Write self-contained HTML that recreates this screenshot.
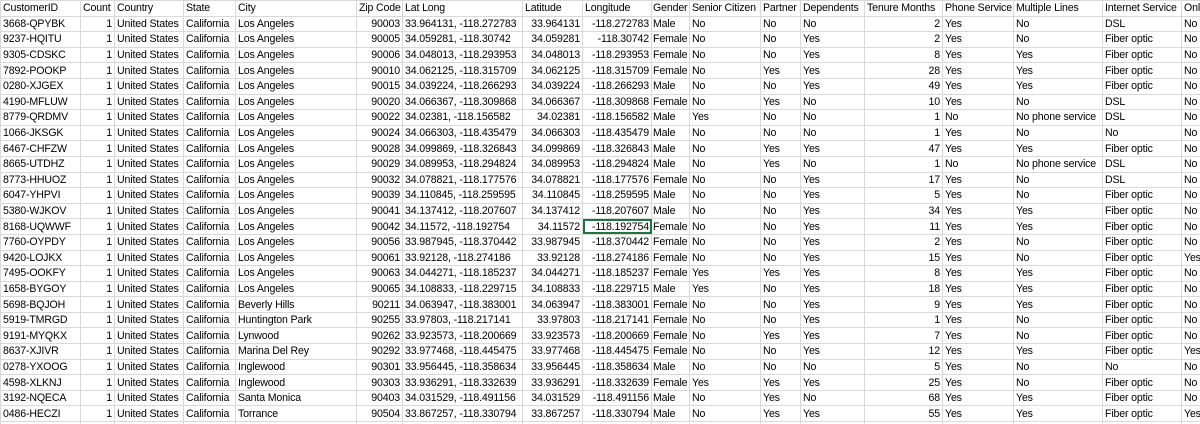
<!DOCTYPE html>
<html><head><meta charset="utf-8"><style>
html,body{margin:0;padding:0;background:#fff;width:1200px;height:424px;overflow:hidden}
table{border-collapse:collapse;table-layout:fixed;font-family:"Liberation Sans",sans-serif;font-size:10.6px;letter-spacing:-0.15px;color:#000;width:1211px}
td{border:1px solid #d9d9d9;height:14.6px;padding:0 2px;white-space:nowrap;overflow:hidden;line-height:14px}
td:nth-child(10){padding:0 0 0 1px}
td:nth-child(2),td:nth-child(6),td:nth-child(8),td:nth-child(9),td:nth-child(14){text-align:right}
tr:first-child td{text-align:left}
.sel{outline:2px solid #217346;outline-offset:-2px}
</style></head><body>
<table>
<colgroup><col style="width:80px"><col style="width:34px"><col style="width:69px"><col style="width:52px"><col style="width:121px"><col style="width:46px"><col style="width:120px"><col style="width:60px"><col style="width:69px"><col style="width:38px"><col style="width:71px"><col style="width:40px"><col style="width:64px"><col style="width:78px"><col style="width:71px"><col style="width:89px"><col style="width:79px"><col style="width:30px"></colgroup>
<tr><td>CustomerID</td><td>Count</td><td>Country</td><td>State</td><td>City</td><td>Zip Code</td><td>Lat Long</td><td>Latitude</td><td>Longitude</td><td>Gender</td><td>Senior Citizen</td><td>Partner</td><td>Dependents</td><td>Tenure Months</td><td>Phone Service</td><td>Multiple Lines</td><td>Internet Service</td><td>Online</td></tr>
<tr><td>3668-QPYBK</td><td>1</td><td>United States</td><td>California</td><td>Los Angeles</td><td>90003</td><td>33.964131, -118.272783</td><td>33.964131</td><td>-118.272783</td><td>Male</td><td>No</td><td>No</td><td>No</td><td>2</td><td>Yes</td><td>No</td><td>DSL</td><td>No</td></tr>
<tr><td>9237-HQITU</td><td>1</td><td>United States</td><td>California</td><td>Los Angeles</td><td>90005</td><td>34.059281, -118.30742</td><td>34.059281</td><td>-118.30742</td><td>Female</td><td>No</td><td>No</td><td>Yes</td><td>2</td><td>Yes</td><td>No</td><td>Fiber optic</td><td>No</td></tr>
<tr><td>9305-CDSKC</td><td>1</td><td>United States</td><td>California</td><td>Los Angeles</td><td>90006</td><td>34.048013, -118.293953</td><td>34.048013</td><td>-118.293953</td><td>Female</td><td>No</td><td>No</td><td>Yes</td><td>8</td><td>Yes</td><td>Yes</td><td>Fiber optic</td><td>No</td></tr>
<tr><td>7892-POOKP</td><td>1</td><td>United States</td><td>California</td><td>Los Angeles</td><td>90010</td><td>34.062125, -118.315709</td><td>34.062125</td><td>-118.315709</td><td>Female</td><td>No</td><td>Yes</td><td>Yes</td><td>28</td><td>Yes</td><td>Yes</td><td>Fiber optic</td><td>No</td></tr>
<tr><td>0280-XJGEX</td><td>1</td><td>United States</td><td>California</td><td>Los Angeles</td><td>90015</td><td>34.039224, -118.266293</td><td>34.039224</td><td>-118.266293</td><td>Male</td><td>No</td><td>No</td><td>Yes</td><td>49</td><td>Yes</td><td>Yes</td><td>Fiber optic</td><td>No</td></tr>
<tr><td>4190-MFLUW</td><td>1</td><td>United States</td><td>California</td><td>Los Angeles</td><td>90020</td><td>34.066367, -118.309868</td><td>34.066367</td><td>-118.309868</td><td>Female</td><td>No</td><td>Yes</td><td>No</td><td>10</td><td>Yes</td><td>No</td><td>DSL</td><td>No</td></tr>
<tr><td>8779-QRDMV</td><td>1</td><td>United States</td><td>California</td><td>Los Angeles</td><td>90022</td><td>34.02381, -118.156582</td><td>34.02381</td><td>-118.156582</td><td>Male</td><td>Yes</td><td>No</td><td>No</td><td>1</td><td>No</td><td>No phone service</td><td>DSL</td><td>No</td></tr>
<tr><td>1066-JKSGK</td><td>1</td><td>United States</td><td>California</td><td>Los Angeles</td><td>90024</td><td>34.066303, -118.435479</td><td>34.066303</td><td>-118.435479</td><td>Male</td><td>No</td><td>No</td><td>No</td><td>1</td><td>Yes</td><td>No</td><td>No</td><td>No</td></tr>
<tr><td>6467-CHFZW</td><td>1</td><td>United States</td><td>California</td><td>Los Angeles</td><td>90028</td><td>34.099869, -118.326843</td><td>34.099869</td><td>-118.326843</td><td>Male</td><td>No</td><td>Yes</td><td>Yes</td><td>47</td><td>Yes</td><td>Yes</td><td>Fiber optic</td><td>No</td></tr>
<tr><td>8665-UTDHZ</td><td>1</td><td>United States</td><td>California</td><td>Los Angeles</td><td>90029</td><td>34.089953, -118.294824</td><td>34.089953</td><td>-118.294824</td><td>Male</td><td>No</td><td>Yes</td><td>No</td><td>1</td><td>No</td><td>No phone service</td><td>DSL</td><td>No</td></tr>
<tr><td>8773-HHUOZ</td><td>1</td><td>United States</td><td>California</td><td>Los Angeles</td><td>90032</td><td>34.078821, -118.177576</td><td>34.078821</td><td>-118.177576</td><td>Female</td><td>No</td><td>No</td><td>Yes</td><td>17</td><td>Yes</td><td>No</td><td>DSL</td><td>No</td></tr>
<tr><td>6047-YHPVI</td><td>1</td><td>United States</td><td>California</td><td>Los Angeles</td><td>90039</td><td>34.110845, -118.259595</td><td>34.110845</td><td>-118.259595</td><td>Male</td><td>No</td><td>No</td><td>Yes</td><td>5</td><td>Yes</td><td>No</td><td>Fiber optic</td><td>No</td></tr>
<tr><td>5380-WJKOV</td><td>1</td><td>United States</td><td>California</td><td>Los Angeles</td><td>90041</td><td>34.137412, -118.207607</td><td>34.137412</td><td>-118.207607</td><td>Male</td><td>No</td><td>No</td><td>Yes</td><td>34</td><td>Yes</td><td>Yes</td><td>Fiber optic</td><td>No</td></tr>
<tr><td>8168-UQWWF</td><td>1</td><td>United States</td><td>California</td><td>Los Angeles</td><td>90042</td><td>34.11572, -118.192754</td><td>34.11572</td><td class="sel">-118.192754</td><td>Female</td><td>No</td><td>No</td><td>Yes</td><td>11</td><td>Yes</td><td>Yes</td><td>Fiber optic</td><td>No</td></tr>
<tr><td>7760-OYPDY</td><td>1</td><td>United States</td><td>California</td><td>Los Angeles</td><td>90056</td><td>33.987945, -118.370442</td><td>33.987945</td><td>-118.370442</td><td>Female</td><td>No</td><td>No</td><td>Yes</td><td>2</td><td>Yes</td><td>No</td><td>Fiber optic</td><td>No</td></tr>
<tr><td>9420-LOJKX</td><td>1</td><td>United States</td><td>California</td><td>Los Angeles</td><td>90061</td><td>33.92128, -118.274186</td><td>33.92128</td><td>-118.274186</td><td>Female</td><td>No</td><td>No</td><td>Yes</td><td>15</td><td>Yes</td><td>No</td><td>Fiber optic</td><td>Yes</td></tr>
<tr><td>7495-OOKFY</td><td>1</td><td>United States</td><td>California</td><td>Los Angeles</td><td>90063</td><td>34.044271, -118.185237</td><td>34.044271</td><td>-118.185237</td><td>Female</td><td>Yes</td><td>Yes</td><td>Yes</td><td>8</td><td>Yes</td><td>Yes</td><td>Fiber optic</td><td>No</td></tr>
<tr><td>1658-BYGOY</td><td>1</td><td>United States</td><td>California</td><td>Los Angeles</td><td>90065</td><td>34.108833, -118.229715</td><td>34.108833</td><td>-118.229715</td><td>Male</td><td>Yes</td><td>No</td><td>Yes</td><td>18</td><td>Yes</td><td>Yes</td><td>Fiber optic</td><td>No</td></tr>
<tr><td>5698-BQJOH</td><td>1</td><td>United States</td><td>California</td><td>Beverly Hills</td><td>90211</td><td>34.063947, -118.383001</td><td>34.063947</td><td>-118.383001</td><td>Female</td><td>No</td><td>No</td><td>Yes</td><td>9</td><td>Yes</td><td>Yes</td><td>Fiber optic</td><td>No</td></tr>
<tr><td>5919-TMRGD</td><td>1</td><td>United States</td><td>California</td><td>Huntington Park</td><td>90255</td><td>33.97803, -118.217141</td><td>33.97803</td><td>-118.217141</td><td>Female</td><td>No</td><td>No</td><td>Yes</td><td>1</td><td>Yes</td><td>No</td><td>Fiber optic</td><td>No</td></tr>
<tr><td>9191-MYQKX</td><td>1</td><td>United States</td><td>California</td><td>Lynwood</td><td>90262</td><td>33.923573, -118.200669</td><td>33.923573</td><td>-118.200669</td><td>Female</td><td>No</td><td>Yes</td><td>Yes</td><td>7</td><td>Yes</td><td>No</td><td>Fiber optic</td><td>No</td></tr>
<tr><td>8637-XJIVR</td><td>1</td><td>United States</td><td>California</td><td>Marina Del Rey</td><td>90292</td><td>33.977468, -118.445475</td><td>33.977468</td><td>-118.445475</td><td>Female</td><td>No</td><td>No</td><td>Yes</td><td>12</td><td>Yes</td><td>Yes</td><td>Fiber optic</td><td>Yes</td></tr>
<tr><td>0278-YXOOG</td><td>1</td><td>United States</td><td>California</td><td>Inglewood</td><td>90301</td><td>33.956445, -118.358634</td><td>33.956445</td><td>-118.358634</td><td>Male</td><td>No</td><td>No</td><td>No</td><td>5</td><td>Yes</td><td>No</td><td>No</td><td>No</td></tr>
<tr><td>4598-XLKNJ</td><td>1</td><td>United States</td><td>California</td><td>Inglewood</td><td>90303</td><td>33.936291, -118.332639</td><td>33.936291</td><td>-118.332639</td><td>Female</td><td>Yes</td><td>Yes</td><td>Yes</td><td>25</td><td>Yes</td><td>No</td><td>Fiber optic</td><td>No</td></tr>
<tr><td>3192-NQECA</td><td>1</td><td>United States</td><td>California</td><td>Santa Monica</td><td>90403</td><td>34.031529, -118.491156</td><td>34.031529</td><td>-118.491156</td><td>Male</td><td>No</td><td>Yes</td><td>No</td><td>68</td><td>Yes</td><td>Yes</td><td>Fiber optic</td><td>No</td></tr>
<tr><td>0486-HECZI</td><td>1</td><td>United States</td><td>California</td><td>Torrance</td><td>90504</td><td>33.867257, -118.330794</td><td>33.867257</td><td>-118.330794</td><td>Male</td><td>No</td><td>Yes</td><td>Yes</td><td>55</td><td>Yes</td><td>Yes</td><td>Fiber optic</td><td>Yes</td></tr>
<tr><td>4846-WHAFZ</td><td>1</td><td>United States</td><td>California</td><td>Whittier</td><td>90601</td><td>34.001617, -118.022334</td><td>34.001617</td><td>-118.022334</td><td>Female</td><td>No</td><td>Yes</td><td>Yes</td><td>37</td><td>Yes</td><td>Yes</td><td>Fiber optic</td><td>No</td></tr>
</table>
</body></html>
